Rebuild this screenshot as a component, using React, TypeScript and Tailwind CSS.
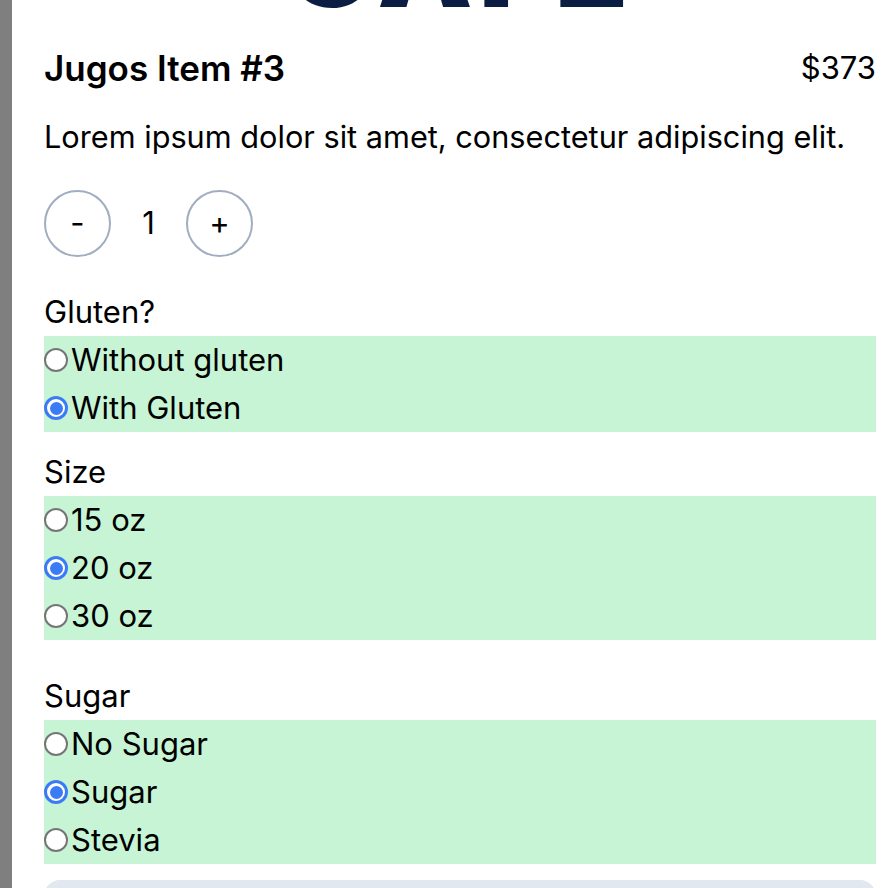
import React from "react";

type Group = { label: string; options: string[]; selected: number; mt: string };

const groups: Group[] = [
  { label: "Gluten?", options: ["Without gluten", "With Gluten"], selected: 1, mt: "mt-[31px]" },
  { label: "Size", options: ["15 oz", "20 oz", "30 oz"], selected: 1, mt: "mt-[16px]" },
  { label: "Sugar", options: ["No Sugar", "Sugar", "Stevia"], selected: 1, mt: "mt-[32px]" },
];

function Radio({ checked }: { checked: boolean }) {
  if (checked) {
    return (
      <span className="flex h-[24px] w-[24px] shrink-0 items-center justify-center rounded-full border-[3px] border-[#3b7cf5] bg-white">
        <span className="h-[13px] w-[13px] rounded-full bg-[#3b7cf5]" />
      </span>
    );
  }
  return <span className="h-[24px] w-[24px] shrink-0 rounded-full border-2 border-[#767676] bg-white" />;
}

export default function App() {
  return (
    <div
      className="flex h-[888px] w-[892px] overflow-hidden bg-white text-black"
      style={{ fontFamily: "Inter, 'Liberation Sans', Arial, sans-serif" }}
    >
      <div className="w-[12px] shrink-0 bg-[#7f7f7f]" />
      <div className="flex min-w-0 flex-1 flex-col pl-[32px] pr-[16px]">
        <div className="h-[9px] shrink-0 overflow-hidden">
          <div className="mt-[-96px] whitespace-nowrap text-center text-[120px] font-black leading-[120px] tracking-[0.05em] text-[#0b1d42]">
            CAFE
          </div>
        </div>
        <div className="mt-[35px] flex h-[48px] shrink-0 items-center justify-between">
          <h1 className="text-[35px] font-semibold leading-[48px]">Jugos Item #3</h1>
          <span className="text-[31px] leading-[48px]">$373</span>
        </div>
        <p className="mt-[21px] shrink-0 text-[30.7px] leading-[48px]">
          Lorem ipsum dolor sit amet, consectetur adipiscing elit.
        </p>
        <div className="mt-[29px] flex shrink-0 items-center">
          <button className="flex h-[67px] w-[67px] items-center justify-center rounded-full border-2 border-[#a0aec0] text-[31px]">
            -
          </button>
          <span className="w-[75px] text-center text-[31px]">1</span>
          <button className="flex h-[67px] w-[67px] items-center justify-center rounded-full border-2 border-[#a0aec0] text-[31px]">
            +
          </button>
        </div>
        {groups.map((g) => (
          <div key={g.label} className={`${g.mt} shrink-0`}>
            <div className="text-[31px] leading-[48px]">{g.label}</div>
            <div className="bg-[#c6f4d5]">
              {g.options.map((o, i) => (
                <label key={o} className="flex h-[48px] items-center gap-[3px] text-[31px]">
                  <Radio checked={i === g.selected} />
                  <span>{o}</span>
                </label>
              ))}
            </div>
          </div>
        ))}
        <div className="mt-[16px] h-[80px] shrink-0 rounded-[16px] bg-[#e2e8f0]" />
      </div>
    </div>
  );
}
